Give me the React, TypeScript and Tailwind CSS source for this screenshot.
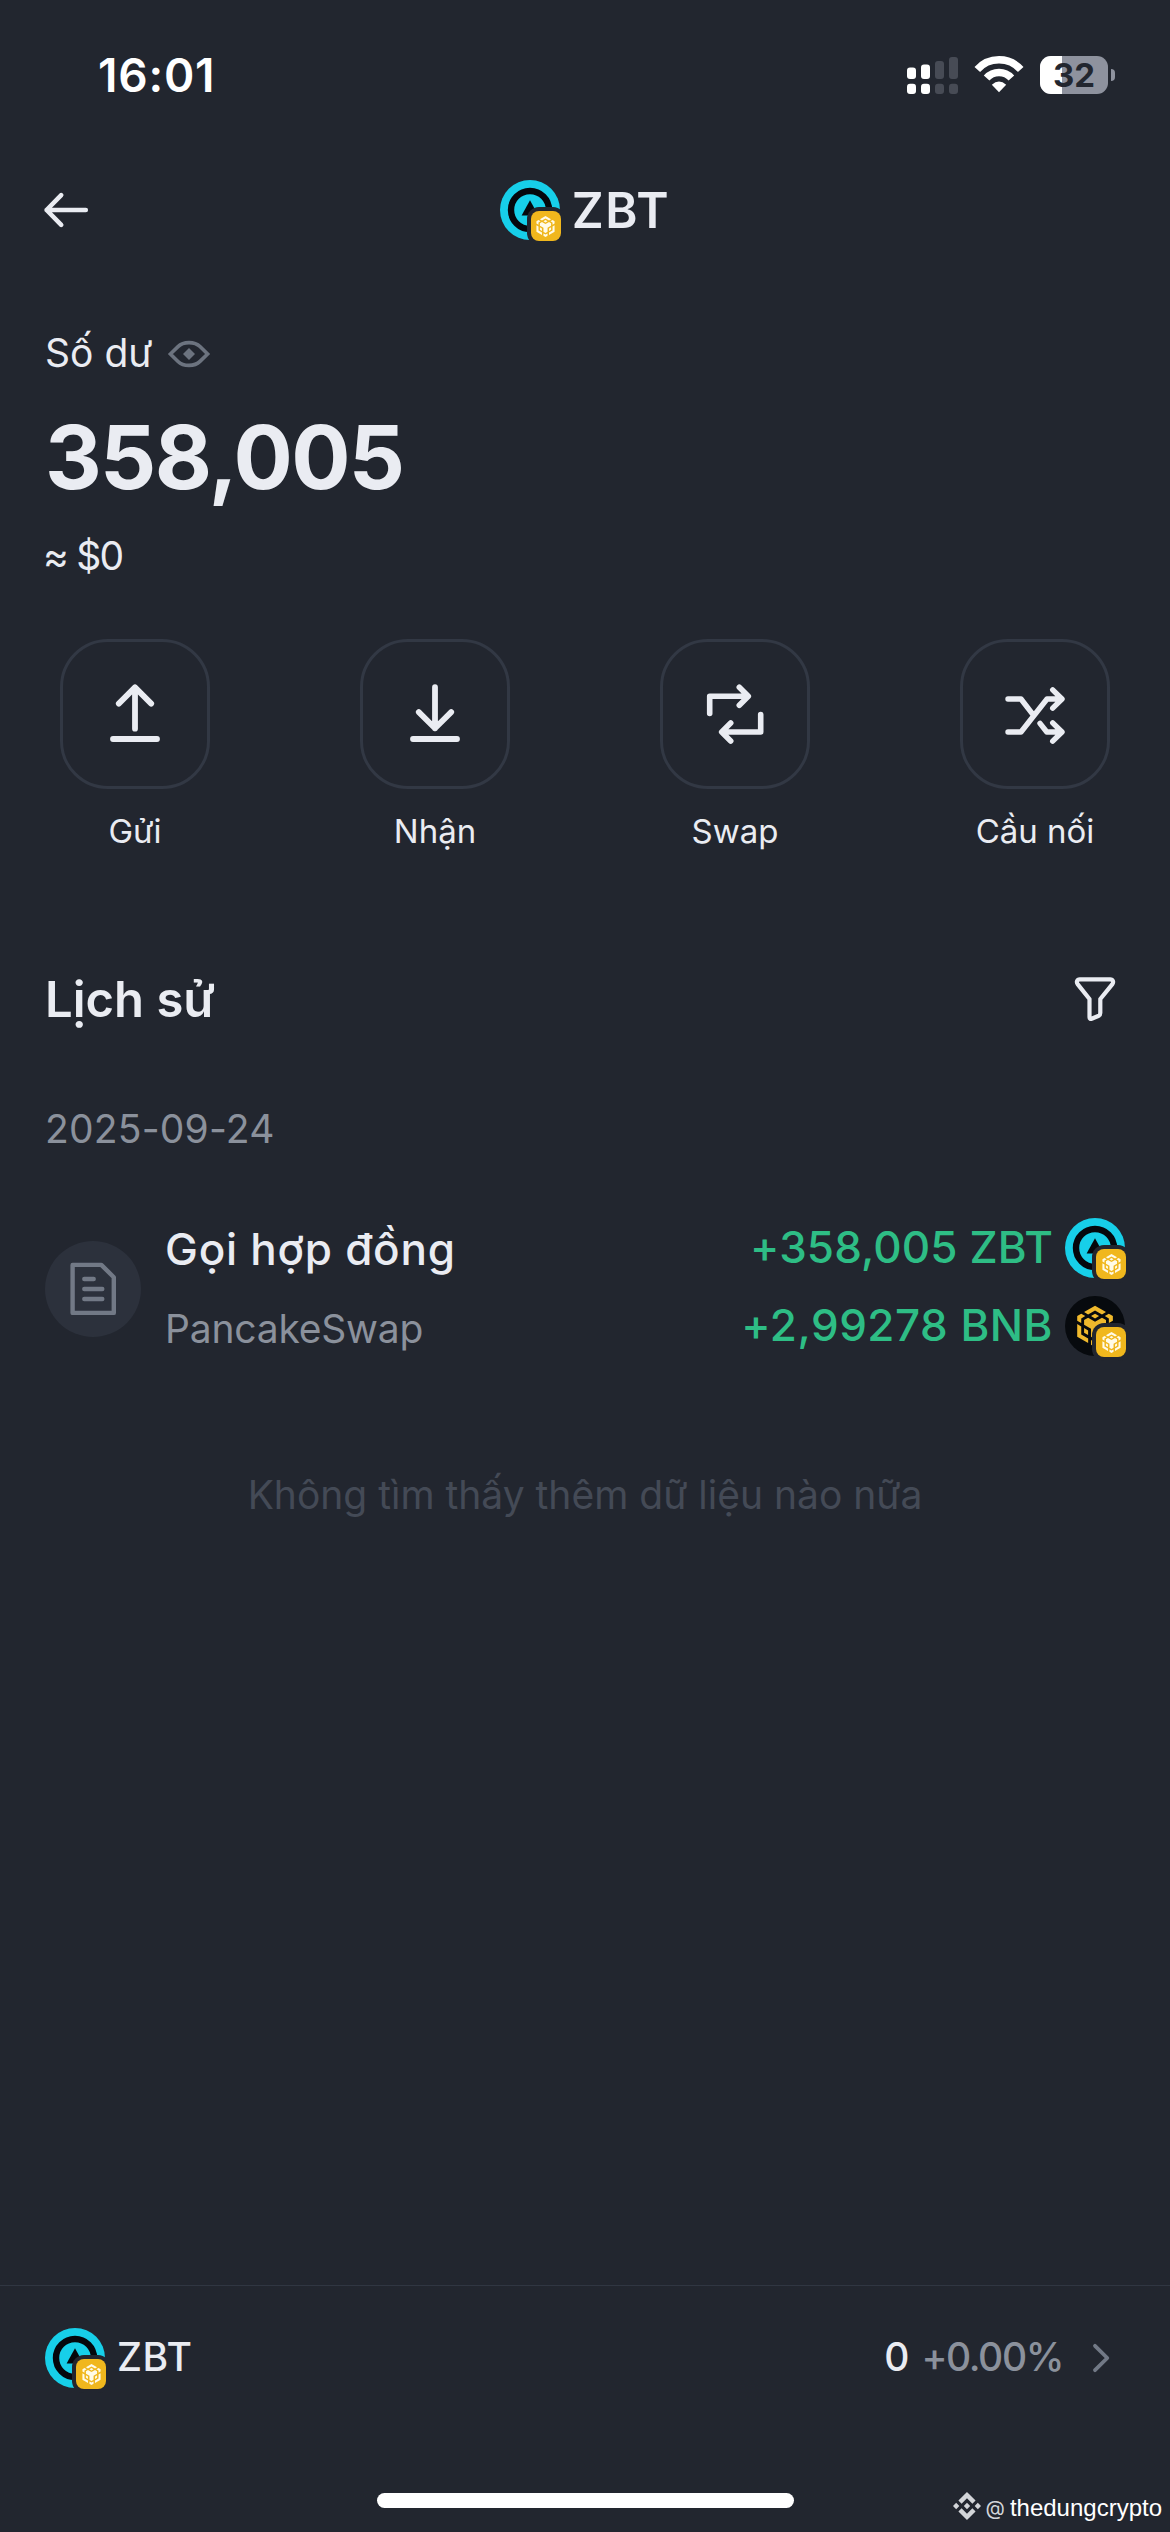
import React from 'react';
import { SiBinance } from 'react-icons/si';

type IconProps = { className?: string };

const BNB_PATH =
  'M5.631 3.676 12.001 0l6.367 3.676-2.34 1.358L12 2.716 7.972 5.034l-2.34-1.358Zm12.737 4.636-2.34-1.358L12 9.272 7.972 6.954l-2.34 1.358v2.716l4.026 2.318v4.636L12 19.341l2.341-1.359v-4.636l4.027-2.318V8.312Zm0 7.352v-2.716l-2.34 1.358v2.716l2.34-1.358Zm1.663.96-4.027 2.318v2.716l6.367-3.676V10.63l-2.34 1.358v4.636Zm-2.34-10.63 2.34 1.358v2.716l2.341-1.358V5.994l-2.34-1.358-2.341 1.358ZM9.66 19.926v2.716L12 24l2.341-1.358v-2.716L12 21.285l-2.34-1.359Zm-4.027-4.262 2.34 1.358v-2.716L5.632 12.95v2.716Zm4.027-9.67L12 7.352l2.341-1.358L12 4.636 9.66 5.994Zm-5.69 1.358 2.34-1.358-2.34-1.358L1.63 5.994V8.71l2.34 1.358V7.352Zm0 4.636L1.63 10.63v7.352l6.367 3.676v-2.716L3.97 16.624v-4.636Z';

const TokenIcon: React.FC<{ symbol: 'ZBT' | 'BNB' }> = ({ symbol }) => (
  <div className="relative w-[60px] h-[60px] shrink-0">
    {symbol === 'ZBT' ? (
      <svg viewBox="0 0 60 60" className="w-[60px] h-[60px]">
        <circle cx="30" cy="30" r="30" fill="#17cfe9" />
        <circle cx="30" cy="30" r="19" fill="none" stroke="#05080d" strokeWidth="6.4" />
        <path d="M30 20.3 38.4 35.5H21.6Z" fill="#05080d" />
      </svg>
    ) : (
      <svg viewBox="0 0 60 60" className="w-[60px] h-[60px]">
        <circle cx="30" cy="30" r="30" fill="#070a0e" />
        <path d={BNB_PATH} fill="#f0b92c" transform="translate(9.4 9.8) scale(1.72)" />
      </svg>
    )}
    {/* Network badge */}
    <div className="absolute left-[27px] top-[27px] w-[38px] h-[38px] rounded-[12px] bg-[#22262f] flex items-center justify-center">
      <div className="w-[30px] h-[30px] rounded-[8px] bg-[#f0b71d] flex items-center justify-center">
        <svg viewBox="0 0 24 24" className="w-[21px] h-[21px]">
          <path d={BNB_PATH} fill="#fffbe8" />
        </svg>
      </div>
    </div>
  </div>
);

const SendIcon = ({ className }: IconProps) => (
  <svg viewBox="0 0 80 80" fill="none" stroke="currentColor" strokeWidth="5.8" strokeLinecap="round" strokeLinejoin="round" className={className}>
    <path d="M40 54.7V13.4M23.8 29.6 40 13.4l16.2 16.2M18 65h44" />
  </svg>
);

const ReceiveIcon = ({ className }: IconProps) => (
  <svg viewBox="0 0 80 80" fill="none" stroke="currentColor" strokeWidth="5.8" strokeLinecap="round" strokeLinejoin="round" className={className}>
    <path d="M40 13.2v41.1M23.8 38.1 40 54.3l16.2-16.2M18 65h44" />
  </svg>
);

const SwapIcon = ({ className }: IconProps) => (
  <svg viewBox="0 0 80 80" fill="none" stroke="currentColor" strokeWidth="5.6" strokeLinecap="round" strokeLinejoin="round" className={className}>
    <path d="M14.7 39.5V22.3h38.2M44.3 13.3l9 9-9 9M65.7 40.5V58H27M35.7 49l-9 9 9 9" />
  </svg>
);

const BridgeIcon = ({ className }: IconProps) => (
  <svg viewBox="0 0 80 80" fill="none" stroke="currentColor" strokeWidth="5.4" strokeLinecap="round" strokeLinejoin="round" className={className}>
    <path d="M13 25h13l12.4 16.2M13 58h13l26-33h14.5M57.7 15.8 67 25l-9.3 9.2M45 49.3 51.8 58h14.7M57.7 48.8 67 58l-9.3 9.2" />
  </svg>
);

const EyeIcon = ({ className }: IconProps) => (
  <svg viewBox="0 0 44 30" className={className}>
    <path
      d="M3.4 15 11 7.6C14 4.6 17 3.6 22 3.6S30 4.6 33 7.6L40.6 15 33 22.4C30 25.4 27 26.4 22 26.4S14 25.4 11 22.4Z"
      fill="none"
      stroke="currentColor"
      strokeWidth="3.6"
    />
    <path d="M22 9l6 6-6 6-6-6Z" fill="currentColor" />
  </svg>
);

const FilterIcon = ({ className }: IconProps) => (
  <svg viewBox="0 0 44 48" fill="none" stroke="currentColor" strokeWidth="4.2" strokeLinejoin="round" className={className}>
    <path d="M6.8 4.3H37.2C40 4.3 41 7 39.2 9.4L27.3 24v14c0 1.5-.5 2.2-1.5 2.7L18.6 43.7c-1.2.5-2.1 0-2.1-1.4V24L4.8 9.4C3 7 4 4.3 6.8 4.3Z" />
  </svg>
);

const DocIcon = ({ className }: IconProps) => (
  <svg viewBox="0 0 48 56" fill="none" stroke="currentColor" strokeWidth="4.4" strokeLinejoin="round" strokeLinecap="round" className={className}>
    <path d="M3.6 3.9H32.3L44.8 16.2V51.9H3.6Z" />
    <path d="M15.3 18h9.4M15.3 28h18M15.3 38h18" />
  </svg>
);

const actions = [
  { label: 'Gửi', icon: SendIcon },
  { label: 'Nhận', icon: ReceiveIcon },
  { label: 'Swap', icon: SwapIcon },
  { label: 'Cầu nối', icon: BridgeIcon },
];

const StatusBar = () => (
  <div className="h-[150px] pl-[98px] pr-[55px] flex items-center justify-between text-white">
    <span className="text-[46px] leading-none font-semibold tracking-[0.8px]">16:01</span>
    <div className="flex items-center">
      <svg viewBox="0 0 51 38" className="w-[51px] h-[38px]">
        <g fill="#fff">
          <rect x="0" y="11.5" width="9" height="11.5" rx="3" />
          <rect x="14" y="8.5" width="9" height="14.5" rx="3" />
          <rect x="0" y="27.7" width="9" height="10.3" rx="3" />
          <rect x="14" y="27.7" width="9" height="10.3" rx="3" />
        </g>
        <g fill="#474b55">
          <rect x="28" y="5" width="9" height="18" rx="3" />
          <rect x="42" y="1" width="9" height="22" rx="3" />
          <rect x="28" y="27.7" width="9" height="10.3" rx="3" />
          <rect x="42" y="27.7" width="9" height="10.3" rx="3" />
        </g>
      </svg>
      <svg viewBox="0 0 50 38" fill="none" stroke="#fff" strokeWidth="7.5" className="w-[50px] h-[38px] ml-[16px]">
        <path d="M3.3 13.5A29.2 29.2 0 0 1 46.7 13.5" />
        <path d="M12.6 22A16.7 16.7 0 0 1 37.4 22" />
        <path d="M25 36.2 17.8 28.8Q25 22 32.2 28.8Z" fill="#fff" stroke="none" />
      </svg>
      <div className="relative ml-[16px] w-[68px] h-[38px] rounded-[11px] overflow-hidden bg-[#8e929e] flex">
        <div className="w-[22px] bg-white" />
        <span className="absolute inset-0 flex items-center justify-center text-[33px] leading-none font-bold text-[#22262f]">32</span>
      </div>
      <div className="ml-[3px] w-[4px] h-[12px] rounded-r-full bg-[#8e929e]" />
    </div>
  </div>
);

export default function App() {
  return (
    <div className="w-[1170px] h-[2532px] bg-[#22262f] text-[#eaecf2] font-['Inter',sans-serif] flex flex-col overflow-hidden relative">
      <StatusBar />

      {/* Header */}
      <div className="h-[120px] grid grid-cols-[1fr_auto_1fr] items-center px-[42px]">
        <svg viewBox="0 0 48 40" fill="none" stroke="currentColor" strokeWidth="4.6" strokeLinecap="round" strokeLinejoin="round" className="w-[48px] h-[40px]">
          <path d="M43.8 20H4.6M19.2 5.2 4.6 20l14.6 14.8" />
        </svg>
        <div className="flex items-center gap-3">
          <TokenIcon symbol="ZBT" />
          <span className="text-[49px] leading-none font-semibold tracking-[1.5px]">ZBT</span>
        </div>
      </div>

      {/* Balance */}
      <div className="mt-[52px] px-[45px]">
        <div className="h-[60px] flex items-center gap-[15px]">
          <span className="text-[39px] leading-none">Số dư</span>
          <EyeIcon className="w-[44px] h-[30px] mt-[4px] text-[#6c737f]" />
        </div>
        <div className="mt-[25px] h-[100px] text-[88px] leading-[100px] font-bold tracking-[-1.7px]">358,005</div>
        <div className="mt-[19px] h-[60px] -ml-0.5 text-[39px] leading-[60px] tracking-[-1.8px]">≈ $0</div>
      </div>

      {/* Actions */}
      <div className="mt-[53px] px-[60px] flex justify-between">
        {actions.map(({ label, icon: Icon }) => (
          <div key={label} className="w-[150px] flex flex-col items-center">
            <div className="w-[150px] h-[150px] rounded-[48px] border-[3px] border-[#323844] flex items-center justify-center">
              <Icon className="w-20 h-20" />
            </div>
            <span className="mt-[17px] text-[33px] leading-[50px] whitespace-nowrap">{label}</span>
          </div>
        ))}
      </div>

      {/* History */}
      <div className="mt-[103px] h-20 pl-[45px] pr-[53px] flex items-center justify-between">
        <h2 className="text-[49px] leading-none font-semibold">Lịch sử</h2>
        <FilterIcon className="w-[44px] h-[48px]" />
      </div>
      <div className="mt-[60px] px-[45px] text-[39px] leading-[60px] tracking-[0.2px] text-[#8b919c]">2025-09-24</div>

      <div className="mt-[50px] h-[160px] px-[45px] flex">
        <div className="w-24 h-24 mt-8 rounded-full bg-[#2c313c] flex items-center justify-center">
          <DocIcon className="w-[48px] h-[56px] text-[#727986]" />
        </div>
        <div className="ml-6 flex-1">
          <div className="text-[44px] leading-[80px] font-medium tracking-[0.75px]">Gọi hợp đồng</div>
          <div className="text-[39px] leading-[80px] tracking-[-0.2px] text-[#8b919c]">PancakeSwap</div>
        </div>
        <div className="flex flex-col items-end text-[44px] font-medium text-[#2ebd85]">
          <div className="h-[78px] flex items-center gap-3">
            <span className="leading-none tracking-[0.1px] -mt-0.5">+358,005 ZBT</span>
            <TokenIcon symbol="ZBT" />
          </div>
          <div className="h-[78px] flex items-center gap-3">
            <span className="leading-none tracking-[0.5px] -mt-0.5">+2,99278 BNB</span>
            <TokenIcon symbol="BNB" />
          </div>
        </div>
      </div>

      <div className="mt-[96px] text-center text-[39px] leading-[60px] text-[#444a56]">
        Không tìm thấy thêm dữ liệu nào nữa
      </div>

      {/* Bottom bar */}
      <div className="mt-auto h-[247px] border-t border-[#303642] flex flex-col items-center">
        <div className="w-full h-[144px] pl-[45px] pr-[59px] flex items-center">
          <TokenIcon symbol="ZBT" />
          <span className="ml-3 text-[39px] leading-none font-medium tracking-[0.5px] -mt-1">ZBT</span>
          <div className="ml-auto -mt-1 flex items-center gap-3 text-[39px] leading-none font-medium">
            <span>0</span>
            <span className="tracking-[-1.4px] text-[#8b919c]">+0.00%</span>
          </div>
          <svg viewBox="0 0 20 32" fill="none" stroke="#727986" strokeWidth="3.8" strokeLinecap="round" strokeLinejoin="round" className="ml-7 w-[20px] h-[32px]">
            <path d="M4 3.8 16.3 16 4 28.2" />
          </svg>
        </div>
        <div className="mt-[63px] w-[417px] h-[15px] rounded-full bg-white" />
      </div>

      {/* Author tag over the bottom bar */}
      <div className="absolute right-[8px] bottom-[9px] h-[30px] flex items-center font-['Liberation_Sans',sans-serif]">
        <SiBinance className="w-7 h-7 -mt-1 text-[#d3d5d9]" />
        <span className="ml-[5px] font-['Inter',sans-serif] text-[20px] leading-none text-[#d3d5d9]">@</span>
        <span className="ml-[5px] text-[24px] leading-none text-white">thedungcrypto</span>
      </div>
    </div>
  );
}
